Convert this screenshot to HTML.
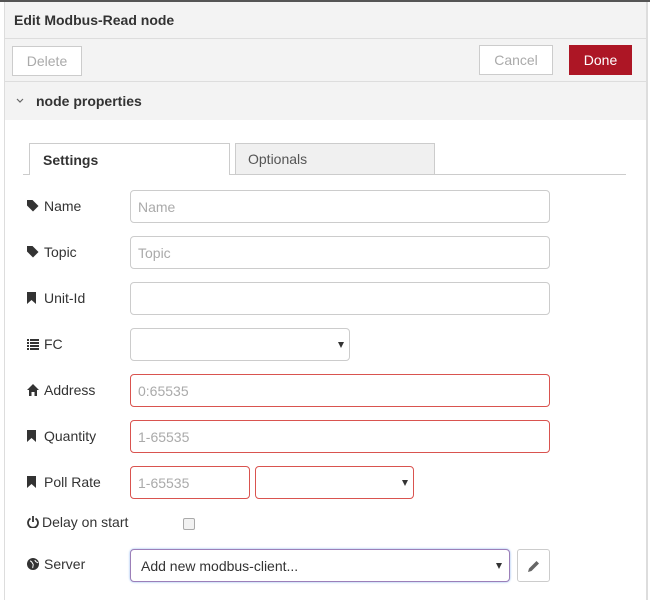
<!DOCTYPE html>
<html><head><style>
*{box-sizing:border-box;margin:0;padding:0}
body{width:650px;height:600px;overflow:hidden;background:#fff;font-family:"Liberation Sans",Arial,sans-serif;font-size:14px;color:#333;position:relative}
.a{position:absolute}
.inp{position:absolute;height:33px;border:1px solid #ccc;border-radius:4px;background:#fff;color:#aaa;font-size:14px;padding:8px 0 0 7px}
.red{border-color:#d9534f}
.lbl{position:absolute;left:27px;font-size:14px;color:#333}
.lbl svg{vertical-align:-1px;margin-right:5px}
.arr{position:absolute;right:5px;top:13px;width:0;height:0;border-left:3.5px solid transparent;border-right:3.5px solid transparent;border-top:6px solid #333}
</style></head><body>
<div class="a" style="left:0;top:0;width:650px;height:2px;background:#555"></div>
<div class="a" style="left:4px;top:2px;width:1px;height:598px;background:#ddd"></div>
<div class="a" style="left:646px;top:2px;width:2px;height:598px;background:#ddd"></div>
<div class="a" style="left:5px;top:2px;width:641px;height:118px;background:#f3f3f3"></div>
<div class="a" style="left:5px;top:38px;width:641px;height:1px;background:#ddd"></div>
<div class="a" style="left:5px;top:81px;width:641px;height:1px;background:#ddd"></div>
<div class="a" style="left:14px;top:12px;font-weight:bold;font-size:14px;color:#333">Edit Modbus-Read node</div>
<div class="a" style="left:12px;top:46px;width:70px;height:30px;border:1px solid #ccc;background:#fff;color:#aaa;text-align:center;line-height:28px">Delete</div>
<div class="a" style="left:479px;top:45px;width:74px;height:30px;border:1px solid #ccc;background:#fff;color:#aaa;text-align:center;line-height:28px">Cancel</div>
<div class="a" style="left:569px;top:45px;width:63px;height:30px;background:#ad1625;color:#fff;text-align:center;line-height:30px">Done</div>
<svg class="a" style="left:16px;top:98px" width="8" height="6" viewBox="0 0 8 6"><path d="M1 1l3 3 3-3" fill="none" stroke="#666" stroke-width="1.2"/></svg>
<div class="a" style="left:36px;top:93px;font-weight:bold;color:#333">node properties</div>

<div class="a" style="left:23px;top:174px;width:603px;height:1px;background:#ccc"></div>
<div class="a" style="left:29px;top:143px;width:201px;height:32px;border:1px solid #ccc;border-bottom:none;background:#fff;font-weight:bold;padding:8px 0 0 13px">Settings</div>
<div class="a" style="left:235px;top:143px;width:200px;height:31px;border:1px solid #ccc;border-bottom:none;background:#f0f0f0;color:#555;padding:7px 0 0 12px">Optionals</div>

<div class="lbl" style="top:198px"><svg width="12" height="12" viewBox="0 0 12 12"><path d="M0 0h5.5l6 6-5.5 5.5-6-6z" fill="#333"/></svg>Name</div>
<div class="inp" style="left:130px;top:190px;width:420px">Name</div>
<div class="lbl" style="top:244px"><svg width="12" height="12" viewBox="0 0 12 12"><path d="M0 0h5.5l6 6-5.5 5.5-6-6z" fill="#333"/></svg>Topic</div>
<div class="inp" style="left:130px;top:236px;width:420px">Topic</div>
<div class="lbl" style="top:290px"><svg width="12" height="12" viewBox="0 0 12 12"><path d="M0 0h9v12L4.5 8 0 12z" fill="#333"/></svg>Unit-Id</div>
<div class="inp" style="left:130px;top:282px;width:420px"></div>
<div class="lbl" style="top:336px"><svg width="12" height="11" viewBox="0 0 12 11"><path d="M0 0h2v2H0zM3 0h9v2H3zM0 3h2v2H0zM3 3h9v2H3zM0 6h2v2H0zM3 6h9v2H3zM0 9h2v2H0zM3 9h9v2H3z" fill="#333"/></svg>FC</div>
<div class="inp" style="left:130px;top:328px;width:220px"><span class="arr"></span></div>
<div class="lbl" style="top:382px"><svg width="12" height="12" viewBox="0 0 12 12"><path d="M6 0l6 6h-2v6H7.5V8h-3v4H2V6H0z" fill="#333"/></svg>Address</div>
<div class="inp red" style="left:130px;top:374px;width:420px">0:65535</div>
<div class="lbl" style="top:428px"><svg width="12" height="12" viewBox="0 0 12 12"><path d="M0 0h9v12L4.5 8 0 12z" fill="#333"/></svg>Quantity</div>
<div class="inp red" style="left:130px;top:420px;width:420px">1-65535</div>
<div class="lbl" style="top:474px"><svg width="12" height="12" viewBox="0 0 12 12"><path d="M0 0h9v12L4.5 8 0 12z" fill="#333"/></svg>Poll Rate</div>
<div class="inp red" style="left:130px;top:466px;width:120px">1-65535</div>
<div class="inp red" style="left:255px;top:466px;width:159px"><span class="arr"></span></div>
<div class="lbl" style="top:514px"><svg width="12" height="12" viewBox="0 0 12 12" style="margin-right:3px"><path d="M3.5 2.5A5 5 0 1 0 8.5 2.5" fill="none" stroke="#333" stroke-width="1.8"/><path d="M6 0v6" stroke="#333" stroke-width="1.8"/></svg>Delay on start</div>
<div class="a" style="left:183px;top:518px;width:12px;height:12px;border:1px solid #aaa;border-radius:2px;background:#f2f2f2"></div>
<div class="lbl" style="top:556px"><svg width="12" height="12" viewBox="0 0 12 12"><circle cx="6" cy="6" r="6" fill="#333"/><path d="M3 3c2 0 2 2 3 3s-1 3 0 4M8 2c0 2 2 2 3 3" stroke="#fff" stroke-width="1" fill="none"/></svg>Server</div>
<div class="inp" style="left:130px;top:549px;width:380px;border-color:#9c7fb8;color:#333;padding-left:10px;box-shadow:0 0 2px #8ab4f0">Add new modbus-client...<span class="arr" style="top:13px;right:7px"></span></div>
<div class="a" style="left:517px;top:549px;width:33px;height:33px;border:1px solid #ccc;border-radius:3px;background:#fff"><svg width="12" height="12" viewBox="0 0 12 12" style="position:absolute;left:10px;top:10px"><path d="M0 12l1-3.5L8.5 1l2.5 2.5L3.5 11z" fill="#666"/></svg></div>
</body></html>
